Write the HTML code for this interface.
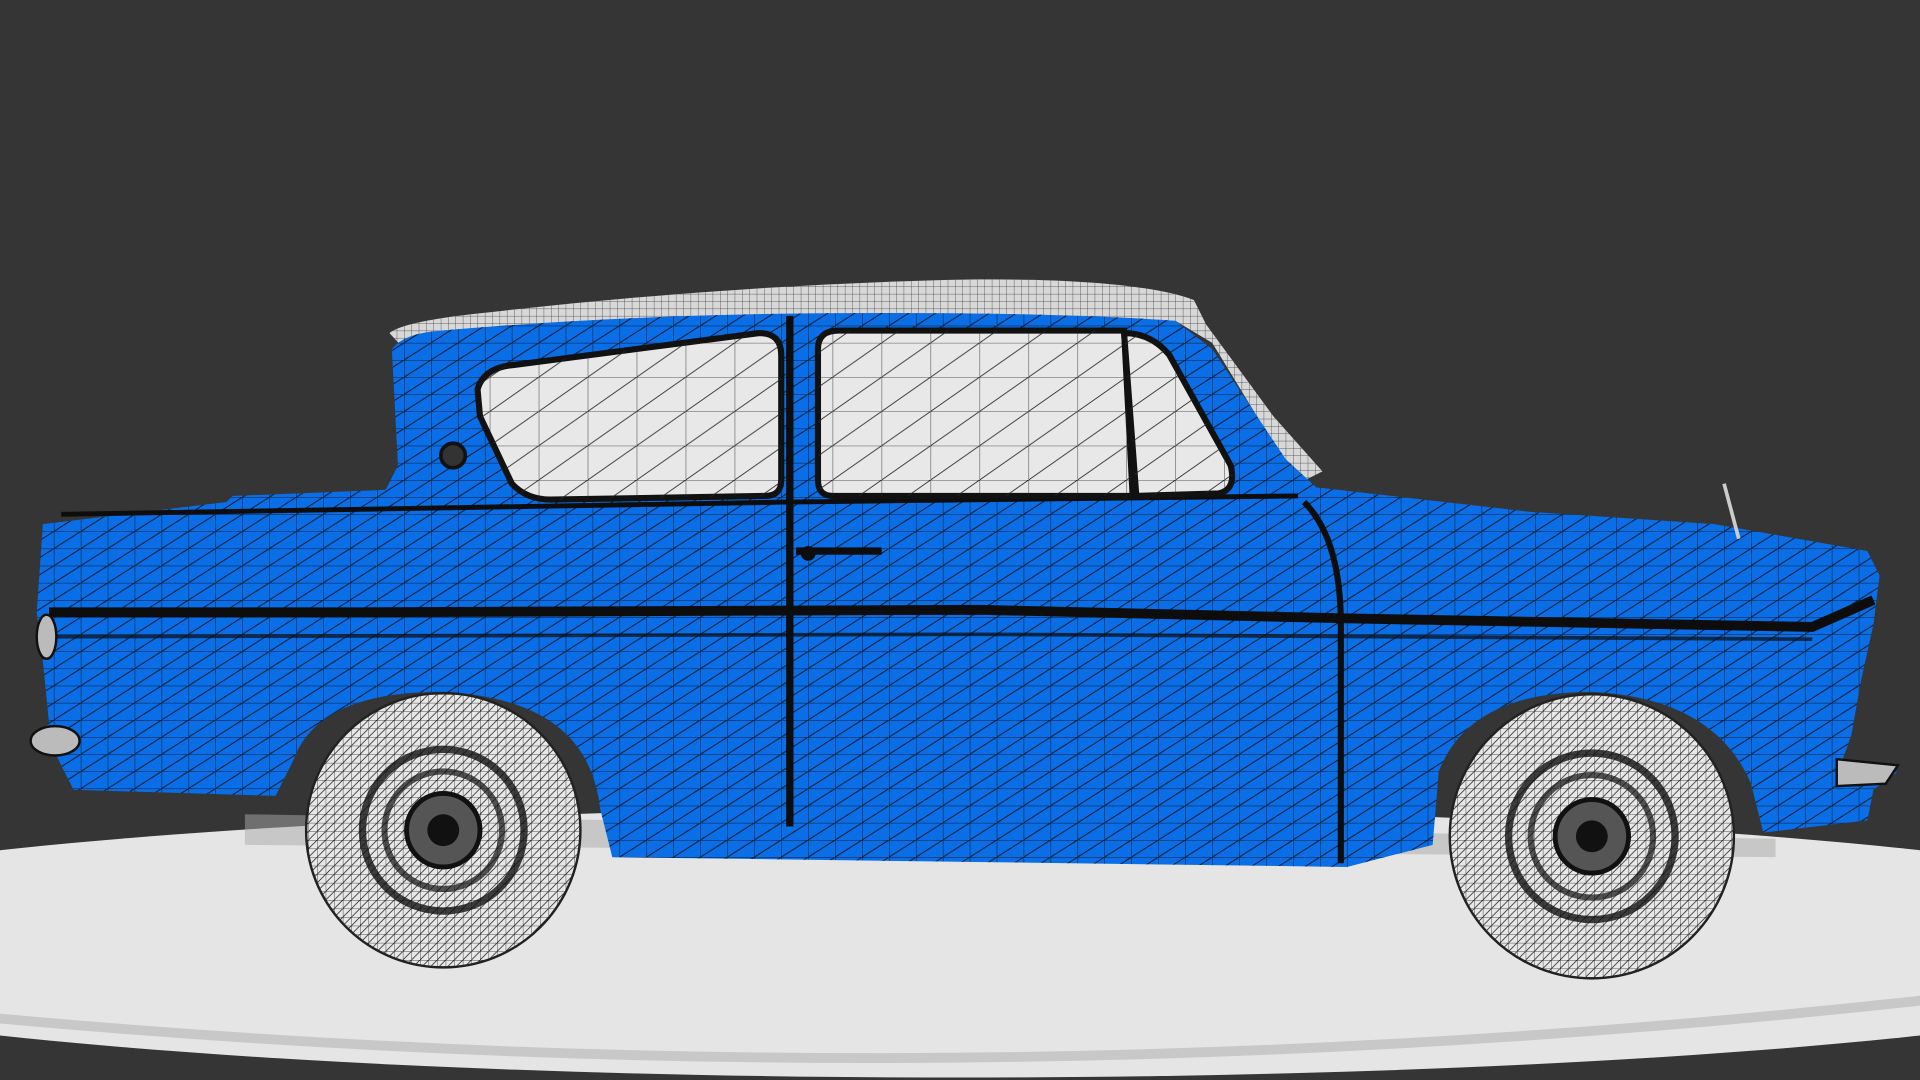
<!DOCTYPE html>
<html><head><meta charset="utf-8"><style>
html,body{margin:0;padding:0;background:#353535;overflow:hidden}
svg{display:block}
</style></head><body>
<svg width="1920" height="1080" viewBox="0 0 1568 882" preserveAspectRatio="none" xmlns="http://www.w3.org/2000/svg">
<defs>
<pattern id="mesh" width="22" height="14" patternUnits="userSpaceOnUse">
<path d="M0 0H22M0 0V14M0 14L22 0" stroke="#0a0a0a" stroke-width="0.8" fill="none" opacity="0.85"/>
</pattern>
<pattern id="wmesh" width="7" height="7" patternUnits="userSpaceOnUse">
<path d="M0 0H7M0 0V7M0 7L7 0" stroke="#111" stroke-width="0.6" fill="none"/>
</pattern>
<pattern id="glass" width="40" height="28" patternUnits="userSpaceOnUse">
<path d="M0 0H40M0 0V28M0 28L40 0" stroke="#222" stroke-width="0.7" fill="none"/>
</pattern>
<pattern id="roofm" width="6" height="6" patternUnits="userSpaceOnUse">
<path d="M0 0H6M0 0V6" stroke="#111" stroke-width="0.6" fill="none"/>
</pattern>
<path id="body" d="M35 428 L185 410 L190 405 L315 400 L325 380 L320 285 Q330 272 360 270 Q500 258 650 256 Q850 254 960 262 L990 285 L1050 375 L1075 398 L1250 418 L1400 428 L1525 450 L1535 470 L1530 510 L1520 555 L1512 600 L1505 620 L1550 630 L1530 645 L1525 670 L1440 680 L1430 640 Q1400 570 1300 565 Q1200 565 1175 630 L1170 690 L1100 708 L500 700 L490 660 Q480 570 360 565 Q260 565 240 620 L225 650 L60 645 L45 615 L28 605 L40 590 L35 540 L30 500 Z"/>
</defs>
<rect width="1568" height="882" fill="#353535"/>
<ellipse cx="784" cy="770" rx="1080" ry="110" fill="#e5e5e5"/>
<path d="M-20 830 Q784 905 1588 815" stroke="#c8c8c8" stroke-width="8" fill="none"/>
<path d="M200 665 L1450 685 L1450 700 L200 690Z" fill="#aaa" opacity="0.5"/>
<path d="M318 272 Q330 262 400 255 Q600 232 800 228 Q930 228 975 245 L985 265 L1040 340 L1080 385 L1060 395 L990 280 L960 262 Q800 255 650 258 Q450 265 330 285Z" fill="#d8d8d8"/>
<path d="M318 272 Q330 262 400 255 Q600 232 800 228 Q930 228 975 245 L985 265 L1040 340 L1080 385 L1060 395 L990 280 L960 262 Q800 255 650 258 Q450 265 330 285Z" fill="url(#roofm)" opacity="0.8"/>
<use href="#body" fill="#0a6ee6"/>
<use href="#body" fill="url(#mesh)"/>
<path d="M40 500 L300 500 L800 498 L1100 505 L1480 512 L1530 490" stroke="#0d0d0d" stroke-width="8" fill="none"/>
<path d="M40 520 L800 518 L1480 522" stroke="#0d0d0d" stroke-width="3" fill="none" opacity="0.7"/>
<path d="M50 420 L645 410 L1060 405" stroke="#0d0d0d" stroke-width="4" fill="none"/>
<path d="M645 258 L645 675" stroke="#0d0d0d" stroke-width="6" fill="none"/>
<path d="M1065 410 Q1095 440 1095 510 L1095 705" stroke="#0d0d0d" stroke-width="5" fill="none"/>
<path d="M650 450 L720 450" stroke="#0d0d0d" stroke-width="6"/>
<circle cx="660" cy="452" r="6" fill="#0d0d0d"/>
<circle cx="370" cy="372" r="10" fill="#333" stroke="#111" stroke-width="3"/>
<path d="M390 318 Q395 300 420 298 L620 272 Q638 272 638 290 L638 392 Q638 405 625 405 L450 408 Q430 408 418 395 L392 340Z" fill="#e8e8e8" stroke="#111" stroke-width="5"/>
<path d="M390 318 Q395 300 420 298 L620 272 Q638 272 638 290 L638 392 Q638 405 625 405 L450 408 Q430 408 418 395 L392 340Z" fill="url(#glass)"/>
<path d="M668 285 Q668 270 685 270 L918 270 L925 405 L680 405 Q668 405 668 392Z" fill="#e8e8e8" stroke="#111" stroke-width="5"/>
<path d="M668 285 Q668 270 685 270 L918 270 L925 405 L680 405 Q668 405 668 392Z" fill="url(#glass)"/>
<path d="M918 272 Q940 272 955 290 L1005 380 Q1010 400 995 403 L928 405Z" fill="#e8e8e8" stroke="#111" stroke-width="5"/>
<path d="M918 272 Q940 272 955 290 L1005 380 Q1010 400 995 403 L928 405Z" fill="url(#glass)"/>
<ellipse cx="45" cy="605" rx="20" ry="12" fill="#bbb" stroke="#111" stroke-width="2"/>
<ellipse cx="38" cy="520" rx="8" ry="18" fill="#bbb" stroke="#111" stroke-width="2"/>
<path d="M1500 620 L1550 625 L1540 640 L1500 642Z" fill="#bbb" stroke="#111" stroke-width="2"/>
<path d="M1408 395 L1420 440" stroke="#ccc" stroke-width="3"/>
<g>
<circle cx="362" cy="678" r="112" fill="#e8e8e8"/>
<circle cx="362" cy="678" r="112" fill="url(#wmesh)"/>
<circle cx="362" cy="678" r="112" fill="none" stroke="#222" stroke-width="2"/>
<circle cx="362" cy="678" r="66" fill="none" stroke="#111" stroke-width="6" opacity="0.8"/>
<circle cx="362" cy="678" r="48" fill="none" stroke="#111" stroke-width="5" opacity="0.7"/>
<circle cx="362" cy="678" r="30" fill="#555" stroke="#111" stroke-width="4"/>
<circle cx="362" cy="678" r="13" fill="#111"/>
</g>
<g>
<circle cx="1300" cy="683" r="116" fill="#e8e8e8"/>
<circle cx="1300" cy="683" r="116" fill="url(#wmesh)"/>
<circle cx="1300" cy="683" r="116" fill="none" stroke="#222" stroke-width="2"/>
<circle cx="1300" cy="683" r="68" fill="none" stroke="#111" stroke-width="6" opacity="0.8"/>
<circle cx="1300" cy="683" r="50" fill="none" stroke="#111" stroke-width="5" opacity="0.7"/>
<circle cx="1300" cy="683" r="30" fill="#555" stroke="#111" stroke-width="4"/>
<circle cx="1300" cy="683" r="13" fill="#111"/>
</g>
</svg>
</body></html>
